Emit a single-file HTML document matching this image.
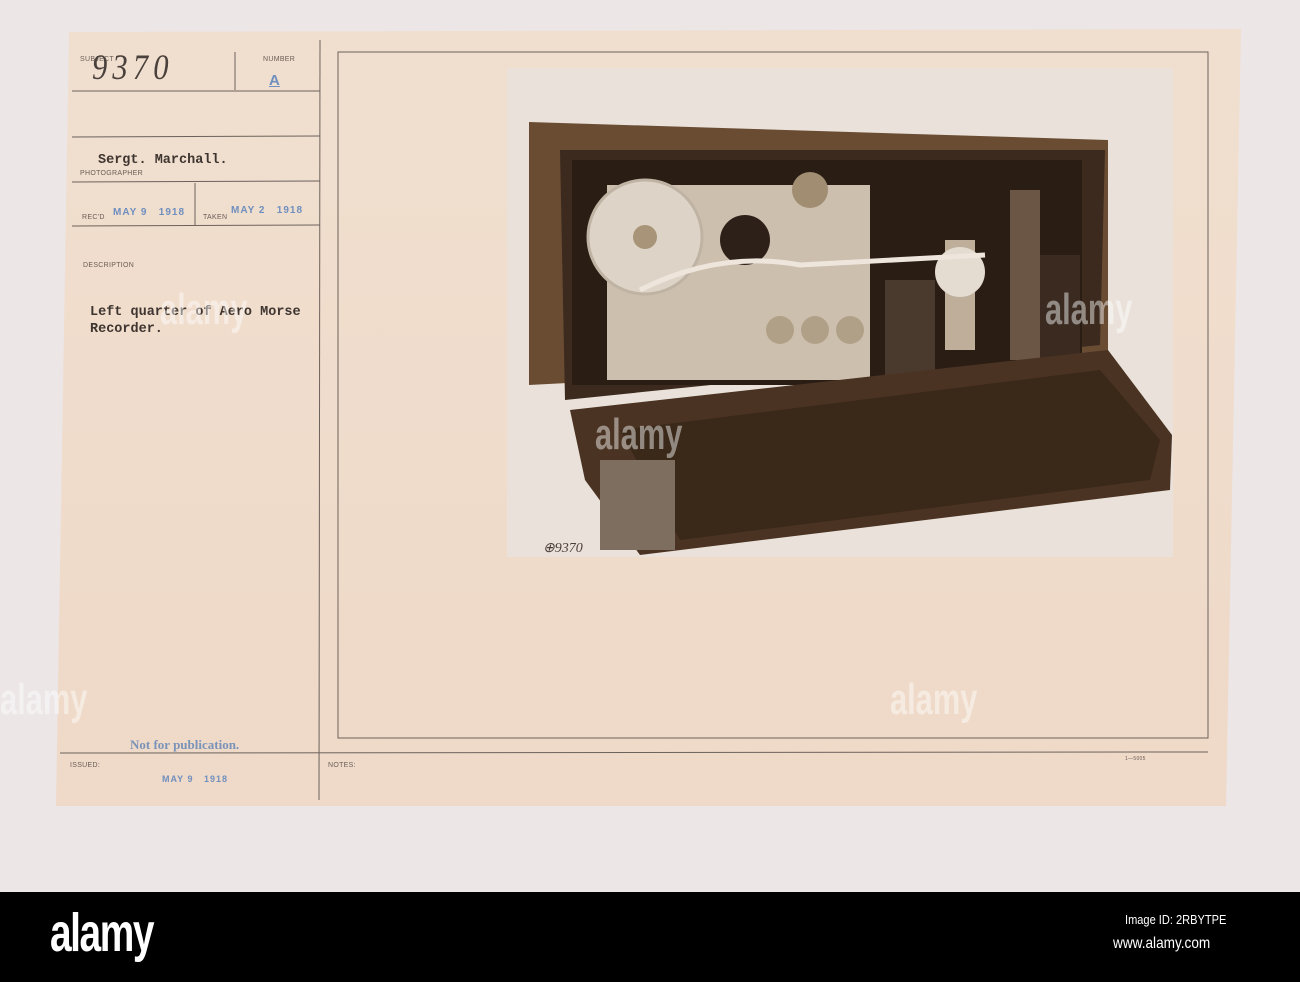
<!DOCTYPE html>
<html><head><meta charset="utf-8"><style>
html,body{margin:0;padding:0}
body{width:1300px;height:982px;background:#ece6e7;position:relative;overflow:hidden;font-family:"Liberation Sans",sans-serif}
.card{position:absolute;left:0;top:0;width:1300px;height:892px}
.t{position:absolute;white-space:nowrap}
.lab{font-size:7px;color:#6a5d56;letter-spacing:.3px}
.ty{font-family:"Liberation Mono",monospace;font-weight:bold;color:#3e3530;font-size:13.5px}
.blue{color:#6f8fbf;font-family:"Liberation Sans",sans-serif;font-weight:bold}
.wm{position:absolute;color:rgba(255,255,255,.45);font-family:"Liberation Sans",sans-serif;font-weight:bold;transform:scaleX(.7);transform-origin:left top}
.bar{position:absolute;left:0;top:892px;width:1300px;height:90px;background:#000}
</style></head><body>
<svg class="card" width="1300" height="892" viewBox="0 0 1300 892">
<defs><linearGradient id="pg" x1="0" y1="0" x2="0" y2="1"><stop offset="0" stop-color="#f0dfcf"/><stop offset="1" stop-color="#efd9c8"/></linearGradient></defs>
<polygon points="69,32 1241,29 1226,806 56,806" fill="url(#pg)"/>
<g stroke="#6c625c" stroke-width="1" fill="none">
<line x1="320" y1="40" x2="319" y2="800"/>
<rect x="338" y="52" width="870" height="686"/>
<line x1="72" y1="91" x2="320" y2="91"/>
<line x1="72" y1="137" x2="320" y2="136"/>
<line x1="72" y1="182" x2="320" y2="181"/>
<line x1="72" y1="226" x2="320" y2="225"/>
<line x1="235" y1="52" x2="235" y2="90"/>
<line x1="195" y1="183" x2="195" y2="225"/>
<line x1="60" y1="753" x2="1208" y2="752"/>
</g>
<rect x="507" y="68" width="666" height="489" fill="#eae2da"/>
<polygon points="529,122 1108,140 1108,355 529,385" fill="#6a4c33"/>
<polygon points="560,150 1105,150 1100,345 565,400" fill="#3b2a1d"/>
<rect x="572" y="160" width="510" height="225" fill="#2a1d14"/>
<rect x="607" y="185" width="263" height="195" fill="#cdbfae"/>
<rect x="885" y="280" width="50" height="110" fill="#4a3a2e"/>
<rect x="945" y="240" width="30" height="110" fill="#bfae9a"/>
<circle cx="960" cy="272" r="25" fill="#e4dcd1"/>
<rect x="1010" y="190" width="30" height="170" fill="#6b5544"/>
<rect x="1040" y="255" width="40" height="110" fill="#3a2a20"/>
<circle cx="645" cy="237" r="57" fill="#ddd3c6" stroke="#bfb3a3" stroke-width="3"/>
<circle cx="645" cy="237" r="12" fill="#a89478"/>
<circle cx="745" cy="240" r="25" fill="#2d2019"/>
<circle cx="810" cy="190" r="18" fill="#a08d72"/>
<circle cx="780" cy="330" r="14" fill="#b0a088"/>
<circle cx="815" cy="330" r="14" fill="#b0a088"/>
<circle cx="850" cy="330" r="14" fill="#b0a088"/>
<path d="M640 290 Q720 250 800 265 L985 255" stroke="#eee6dc" stroke-width="5" fill="none"/>
<polygon points="570,410 1108,350 1172,435 1170,490 640,555 585,480" fill="#4a3322"/>
<polygon points="620,430 1100,370 1160,440 1150,480 680,540" fill="#3a2818"/>
<rect x="600" y="460" width="75" height="90" fill="#7d6e60"/>
<text x="543" y="552" font-size="14" fill="#4a3f38" font-family="Liberation Serif,serif" font-style="italic">⊕9370</text>
</svg>
<div class="t lab" style="left:80px;top:56px">SUBJECT</div>
<div class="t" style="left:92px;top:46px;font-family:'Liberation Serif',serif;font-style:italic;font-size:36px;color:#4a413c;letter-spacing:6px;transform:scaleX(.85);transform-origin:left top">9370</div>
<div class="t lab" style="left:263px;top:56px">NUMBER</div>
<div class="t blue" style="left:269px;top:72px;font-size:15px;text-decoration:underline">A</div>
<div class="t ty" style="left:98px;top:153px">Sergt. Marchall.</div>
<div class="t lab" style="left:80px;top:170px">PHOTOGRAPHER</div>
<div class="t lab" style="left:82px;top:214px">REC'D</div>
<div class="t blue" style="left:113px;top:207px;font-size:10px;letter-spacing:1px">MAY 9 &nbsp; 1918</div>
<div class="t lab" style="left:203px;top:214px">TAKEN</div>
<div class="t blue" style="left:231px;top:205px;font-size:10px;letter-spacing:1px">MAY 2 &nbsp; 1918</div>
<div class="t lab" style="left:83px;top:262px">DESCRIPTION</div>
<div class="t ty" style="left:90px;top:305px">Left quarter of Aero Morse</div>
<div class="t ty" style="left:90px;top:322px">Recorder.</div>
<div class="t" style="left:130px;top:737px;font-family:'Liberation Serif',serif;font-weight:bold;font-size:13px;color:#7a93b8">Not for publication.</div>
<div class="t lab" style="left:70px;top:762px">ISSUED:</div>
<div class="t blue" style="left:162px;top:774px;font-size:9px;letter-spacing:1px">MAY 9 &nbsp; 1918</div>
<div class="t lab" style="left:328px;top:762px">NOTES:</div>
<div class="t lab" style="left:1125px;top:756px;font-size:5px">1—5005</div>
<div class="wm" style="left:160px;top:285px;font-size:44px">alamy</div>
<div class="wm" style="left:0px;top:675px;font-size:44px">alamy</div>
<div class="wm" style="left:595px;top:410px;font-size:44px">alamy</div>
<div class="wm" style="left:1045px;top:285px;font-size:44px">alamy</div>
<div class="wm" style="left:890px;top:675px;font-size:44px">alamy</div>
<div class="bar">
<div class="t" style="left:50px;top:10px;color:#fff;font-weight:bold;font-size:54px;letter-spacing:-2px;transform:scaleX(.72);transform-origin:left top">alamy</div>
<div class="t" style="left:1125px;top:20px;color:#fff;font-size:13px;transform:scaleX(.85);transform-origin:left top">Image ID: 2RBYTPE</div>
<div class="t" style="left:1113px;top:43px;color:#fff;font-size:16px;transform:scaleX(.85);transform-origin:left top">www.alamy.com</div>
</div>
</body></html>
